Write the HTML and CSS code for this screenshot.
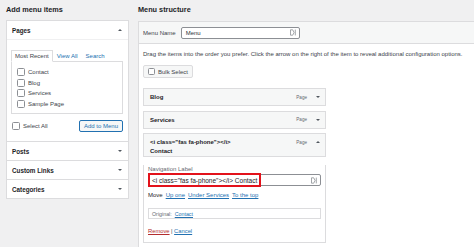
FILE: index.html
```html
<!DOCTYPE html>
<html lang="en">
<head>
  <meta charset="UTF-8" />
  <title>Menus</title>
  <link rel="stylesheet" href="styles.css">
</head>
<body>
<div class="page">

  <!-- ========== Add menu items ========== -->
  <div class="col-left">
    <h2>Add menu items</h2>
    <div class="acc-box">
      <div class="acc open">
        <div class="acc-head">Pages<span class="caret up"></span></div>
        <div class="acc-body">
          <div class="tabs">
            <span class="tab active">Most Recent</span>
            <span class="tab">View All</span>
            <span class="tab">Search</span>
          </div>
          <div class="tab-panel">
            <div class="check"><span class="cb"></span>Contact</div>
            <div class="check"><span class="cb"></span>Blog</div>
            <div class="check"><span class="cb"></span>Services</div>
            <div class="check"><span class="cb"></span>Sample Page</div>
          </div>
          <div class="select-row">
            <div class="check select-all"><span class="cb"></span>Select All</div>
            <span class="btn-add">Add to Menu</span>
          </div>
        </div>
      </div>
      <div class="acc"><div class="acc-head">Posts<span class="caret"></span></div></div>
      <div class="acc"><div class="acc-head">Custom Links<span class="caret"></span></div></div>
      <div class="acc"><div class="acc-head">Categories<span class="caret"></span></div></div>
    </div>
  </div>

  <!-- ========== Menu structure ========== -->
  <div class="col-right">
    <h2>Menu structure</h2>
    <div class="menu-box">
      <div class="menu-head">
        <span>Menu Name</span>
        <div class="field name-field">
          <span>Menu</span>
          <svg class="pm-icon" width="6" height="7" viewBox="0 0 6 7"><path d="M0.5 0.8h2.2l1.4 2.7-1.4 2.7h-2.2z" fill="none" stroke="#8c8f94" stroke-width="0.8"/><path d="M5.3 0.6v5.8" stroke="#8c8f94" stroke-width="0.8"/></svg>
        </div>
      </div>
      <div class="menu-body">
        <p class="hint">Drag the items into the order you prefer. Click the arrow on the right of the item to reveal additional configuration options.</p>
        <div class="bulk"><span class="cb"></span>Bulk Select</div>

        <ul class="items">
          <li class="item">
            <div class="item-bar"><span class="item-title">Blog</span><span class="item-type">Page</span><span class="caret"></span></div>
          </li>
          <li class="item">
            <div class="item-bar"><span class="item-title">Services</span><span class="item-type">Page</span><span class="caret"></span></div>
          </li>
          <li class="item open">
            <div class="item-bar">
              <span class="item-title">&lt;i class=&quot;fas fa-phone&quot;&gt;&lt;/i&gt;<br>Contact</span>
              <span class="item-type">Page</span><span class="caret up"></span>
            </div>
            <div class="item-settings">
              <div class="lbl">Navigation Label</div>
              <div class="field nav-field">
                <span class="hl">&lt;i class=&quot;fas fa-phone&quot;&gt;&lt;/i&gt; Contact</span>
                <svg class="pm-icon" width="6" height="7" viewBox="0 0 6 7"><path d="M0.5 0.8h2.2l1.4 2.7-1.4 2.7h-2.2z" fill="none" stroke="#8c8f94" stroke-width="0.8"/><path d="M5.3 0.6v5.8" stroke="#8c8f94" stroke-width="0.8"/></svg>
              </div>
              <div class="move">
                <span>Move</span><a href="#">Up one</a><a href="#">Under Services</a><a href="#">To the top</a>
              </div>
              <div class="original"><span>Original:</span><a href="#">Contact</a></div>
              <div class="actions"><a href="#" class="remove">Remove</a><span>|</span><a href="#">Cancel</a></div>
            </div>
          </li>
        </ul>
      </div>
    </div>
  </div>

</div>
</body>
</html>
```

FILE: styles.css
```css
:root{
  --azul:#2271b1; --borde:#dcdcde; --gris:#646970; --texto:#3c434a; --rojo:#e3121b;
}
*{box-sizing:border-box}
body{
  margin:0;width:474px;height:247px;overflow:hidden;background:#f0f0f1;
  font-family:"Liberation Sans",Arial,sans-serif;font-size:6px;color:var(--texto);
}
a{color:var(--azul);text-decoration:underline}
.page{display:flex;gap:9px;padding-left:6px}
h2{margin:0;height:20px;line-height:20px;font-size:7.3px;font-weight:bold;color:#1d2327}
.col-left{width:123px;flex:none}
.col-right{width:345px;flex:none}

/* ---------- Acordeón ---------- */
.acc-box{border:1px solid var(--borde);background:#fff}
.acc + .acc{border-top:1px solid var(--borde)}
.acc-head{
  height:18px;display:flex;align-items:center;justify-content:space-between;
  padding:0 6px 0 5px;font-size:6.3px;font-weight:bold;color:#1d2327;
}
.acc.open .acc-head{height:19px;border-bottom:1px solid #f0f0f1}
.acc-body{padding:10px 5px 9px 4px}
.tabs{display:flex;height:12px;margin-bottom:-1px;position:relative}
.tab{display:flex;align-items:center;padding:0 4px;color:var(--azul)}
.tab.active{color:var(--texto);background:#fff;border:1px solid var(--borde);border-bottom-color:#fff;padding:0 3px}
.tab-panel{border:1px solid var(--borde);padding:5px 5px 4px}
.check{display:flex;align-items:center;height:10.6px}
.cb{
  width:8px;height:8px;flex:none;margin-right:3px;background:#fff;
  border:1px solid #8c8f94;border-radius:1.5px;
}
.select-row{display:flex;justify-content:space-between;align-items:center;height:12px;margin-top:6px}
.select-all{margin-left:1px}
.btn-add{
  height:12px;line-height:10px;padding:0 4px;color:var(--azul);background:#f6f7f7;
  border:1px solid var(--azul);border-radius:2px;
}

/* Flechas */
.caret{
  width:0;height:0;flex:none;
  border-left:2px solid transparent;border-right:2px solid transparent;border-top:2.5px solid #50575e;
}
.caret.up{border-top:0;border-bottom:2.5px solid #50575e}

/* ---------- Estructura ---------- */
.menu-box{margin-top:1px;border:1px solid var(--borde);border-right:0;border-bottom:0;background:#fff;height:226px;overflow:hidden}
.menu-head{
  display:flex;align-items:center;gap:5px;height:22px;padding-left:4px;
  background:#f6f7f7;border-bottom:1px solid var(--borde);
}
.field{
  display:flex;align-items:center;justify-content:space-between;height:12px;
  padding:0 3px 0 4px;background:#fff;border:1px solid #8c8f94;border-radius:2px;color:#2c3338;
}
.name-field{width:119px}
.pm-icon{display:block;flex:none}
.menu-body{padding:0 4px}
.hint{margin:6px 0 0;line-height:8px;white-space:nowrap}
.bulk{
  display:flex;align-items:center;width:50px;height:13px;margin-top:7px;padding-left:4px;
  background:#f6f7f7;border:1px solid var(--borde);border-radius:2px;
}
.bulk .cb{width:7px;height:7px}

/* Items */
.items{list-style:none;margin:10px 0 0;padding:0;width:183px}
.item{margin-bottom:4.5px}
.item-bar{
  display:flex;align-items:center;height:18px;padding:0 5px 0 6px;
  background:#f6f7f7;border:1px solid var(--borde);
}
.item-title{flex:1;font-weight:bold;color:#1d2327}
.item-type{font-size:4.6px;color:var(--gris);margin-right:9px}
.item.open .item-bar{height:auto;align-items:flex-start;line-height:9px;padding-top:3.5px;padding-bottom:.5px}
.item.open .caret{margin-top:3px}
.item-settings{padding:0 4px 7px;background:#fff;border:1px solid var(--borde);border-top:0}
.lbl{margin-top:8px;line-height:8px;color:var(--gris)}
.nav-field{margin-top:1px;padding-left:0;font-size:6.5px}
.hl{
  display:flex;align-items:center;height:14px;margin-left:-1px;padding:0 2px;
  border:2px solid var(--rojo);color:#1d2327;
}
.move{display:flex;gap:3px;margin-top:5px;line-height:8px}
.move span{color:#1d2327}
.original{
  display:flex;align-items:center;gap:3px;height:11px;margin-top:9px;padding-left:3px;
  border:1px solid var(--borde);font-size:5.3px;color:var(--gris);
}
.actions{display:flex;gap:1.5px;margin-top:8px;line-height:8px;font-size:5.8px}
.actions .remove{color:#b32d2e}
```
